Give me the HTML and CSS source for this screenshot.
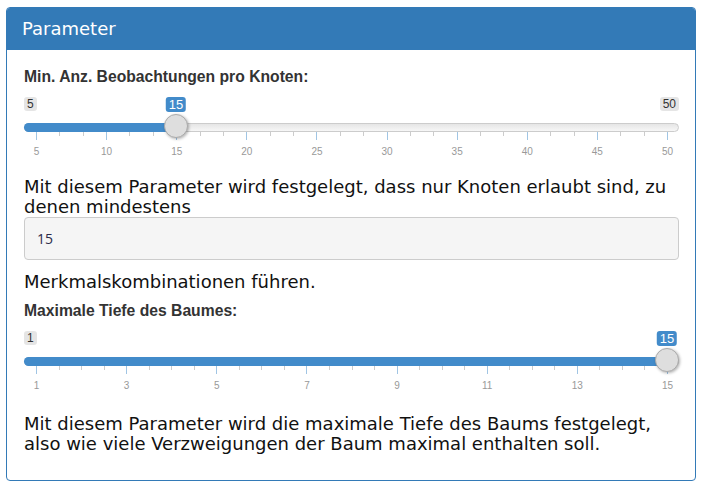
FILE: index.html
```html
<!DOCTYPE html>
<html lang="de">
<head>
<meta charset="utf-8">
<title>Parameter</title>
<link rel="stylesheet" href="styles.css">
</head>
<body>
<div class="panel">
  <div class="panel-heading"><h3 class="panel-title">Parameter</h3></div>
  <div class="panel-body">
    <div class="form-group first">
      <label class="control-label">Min. Anz. Beobachtungen pro Knoten:</label>
      <div class="irs">
        <span class="irs-min">5</span>
        <span class="irs-max">50</span>
        <span class="irs-line"></span>
        <span class="irs-bar" style="width:152px"></span>
        <span class="irs-grid">
          <span class="pol" style="left:0%"></span>
          <span class="pol small" style="left:3.704%"></span>
          <span class="pol small" style="left:7.407%"></span>
          <span class="pol" style="left:11.111%"></span>
          <span class="pol small" style="left:14.815%"></span>
          <span class="pol small" style="left:18.519%"></span>
          <span class="pol" style="left:22.222%"></span>
          <span class="pol small" style="left:25.926%"></span>
          <span class="pol small" style="left:29.630%"></span>
          <span class="pol" style="left:33.333%"></span>
          <span class="pol small" style="left:37.037%"></span>
          <span class="pol small" style="left:40.741%"></span>
          <span class="pol" style="left:44.444%"></span>
          <span class="pol small" style="left:48.148%"></span>
          <span class="pol small" style="left:51.852%"></span>
          <span class="pol" style="left:55.556%"></span>
          <span class="pol small" style="left:59.259%"></span>
          <span class="pol small" style="left:62.963%"></span>
          <span class="pol" style="left:66.667%"></span>
          <span class="pol small" style="left:70.370%"></span>
          <span class="pol small" style="left:74.074%"></span>
          <span class="pol" style="left:77.778%"></span>
          <span class="pol small" style="left:81.481%"></span>
          <span class="pol small" style="left:85.185%"></span>
          <span class="pol" style="left:88.889%"></span>
          <span class="pol small" style="left:92.593%"></span>
          <span class="pol small" style="left:96.296%"></span>
          <span class="pol" style="left:100%"></span>
          <span class="gtext" style="left:0%">5</span>
          <span class="gtext" style="left:11.111%">10</span>
          <span class="gtext" style="left:22.222%">15</span>
          <span class="gtext" style="left:33.333%">20</span>
          <span class="gtext" style="left:44.444%">25</span>
          <span class="gtext" style="left:55.556%">30</span>
          <span class="gtext" style="left:66.667%">35</span>
          <span class="gtext" style="left:77.778%">40</span>
          <span class="gtext" style="left:88.889%">45</span>
          <span class="gtext" style="left:100%">50</span>
        </span>
        <span class="irs-slider" style="left:140px"></span>
        <span class="irs-single" style="left:152px">15</span>
      </div>
    </div>
    <p class="text p1">Mit diesem Parameter wird festgelegt, dass nur Knoten erlaubt sind, zu denen mindestens</p>
    <pre class="verbatim">15</pre>
    <p class="text p2">Merkmalskombinationen führen.</p>
    <div class="form-group second">
      <label class="control-label">Maximale Tiefe des Baumes:</label>
      <div class="irs">
        <span class="irs-min">1</span>
        <span class="irs-line"></span>
        <span class="irs-bar" style="width:643px"></span>
        <span class="irs-grid">
          <span class="pol" style="left:0%"></span>
          <span class="pol small" style="left:3.571%"></span>
          <span class="pol small" style="left:7.143%"></span>
          <span class="pol small" style="left:10.714%"></span>
          <span class="pol" style="left:14.286%"></span>
          <span class="pol small" style="left:17.857%"></span>
          <span class="pol small" style="left:21.429%"></span>
          <span class="pol small" style="left:25%"></span>
          <span class="pol" style="left:28.571%"></span>
          <span class="pol small" style="left:32.143%"></span>
          <span class="pol small" style="left:35.714%"></span>
          <span class="pol small" style="left:39.286%"></span>
          <span class="pol" style="left:42.857%"></span>
          <span class="pol small" style="left:46.429%"></span>
          <span class="pol small" style="left:50%"></span>
          <span class="pol small" style="left:53.571%"></span>
          <span class="pol" style="left:57.143%"></span>
          <span class="pol small" style="left:60.714%"></span>
          <span class="pol small" style="left:64.286%"></span>
          <span class="pol small" style="left:67.857%"></span>
          <span class="pol" style="left:71.429%"></span>
          <span class="pol small" style="left:75%"></span>
          <span class="pol small" style="left:78.571%"></span>
          <span class="pol small" style="left:82.143%"></span>
          <span class="pol" style="left:85.714%"></span>
          <span class="pol small" style="left:89.286%"></span>
          <span class="pol small" style="left:92.857%"></span>
          <span class="pol small" style="left:96.429%"></span>
          <span class="pol" style="left:100%"></span>
          <span class="gtext" style="left:0%">1</span>
          <span class="gtext" style="left:14.286%">3</span>
          <span class="gtext" style="left:28.571%">5</span>
          <span class="gtext" style="left:42.857%">7</span>
          <span class="gtext" style="left:57.143%">9</span>
          <span class="gtext" style="left:71.429%">11</span>
          <span class="gtext" style="left:85.714%">13</span>
          <span class="gtext" style="left:100%">15</span>
        </span>
        <span class="irs-slider" style="left:631px"></span>
        <span class="irs-single" style="left:643px">15</span>
      </div>
    </div>
    <p class="text p3">Mit diesem Parameter wird die maximale Tiefe des Baums festgelegt, also wie viele Verzweigungen der Baum maximal enthalten soll.</p>
  </div>
</div>
</body>
</html>
```

FILE: styles.css
```css
* { box-sizing: border-box; }

html, body {
  margin: 0;
  padding: 0;
  background: #fff;
}

body {
  font-family: "Liberation Sans", Arial, sans-serif;
  color: #333;
  font-size: 14px;
}

.panel {
  margin: 7px 0 0 6px;
  width: 690px;
  border: 1px solid #337ab7;
  border-radius: 4px;
  background: #fff;
}

.panel-heading {
  background: #337ab7;
  padding: 9px 15px 10px;
  border-radius: 3px 3px 0 0;
}

.panel-title {
  margin: 0;
  font-family: "DejaVu Sans", sans-serif;
  font-weight: normal;
  font-size: 18px;
  line-height: 23px;
  color: #fff;
}

.panel-body {
  padding: 17px 16px 26px 17px;
}

.form-group {
  display: flex;
  flex-direction: column;
}

.control-label {
  display: block;
  font-weight: bold;
  font-size: 15.7px;
  line-height: 20px;
  color: #333;
  margin-bottom: 10px;
}

.second {
  margin-top: 10px;
}

.text {
  margin: 0;
  font-family: "DejaVu Sans", sans-serif;
  font-size: 18px;
  line-height: 19.8px;
  color: #111;
}

.p1 { margin-top: 19px; }
.p2 { margin-top: 12px; }
.p3 { margin-top: 22px; }

.verbatim {
  margin: 0;
  height: 43px;
  padding: 11px 12px;
  font-family: "Open Sans", sans-serif;
  font-size: 14px;
  line-height: 19px;
  color: #2b2b4a;
  background: #f5f5f5;
  border: 1px solid #ccc;
  border-radius: 4px;
}

/* slider */
.irs {
  position: relative;
  display: block;
  height: 61px;
}

.irs-min, .irs-max {
  position: absolute;
  top: 0;
  font-size: 12px;
  line-height: 12px;
  padding: 1px 3px;
  color: #333;
  background: rgba(0, 0, 0, 0.1);
  border-radius: 3px;
}
.irs-min { left: 0; }
.irs-max { right: 0; }

.irs-line {
  position: absolute;
  left: 0;
  right: 0;
  top: 26px;
  height: 9px;
  border: 1px solid #ccc;
  border-radius: 16px;
  background: linear-gradient(to bottom, #dddddd -50%, #ffffff 150%);
}

.irs-bar {
  position: absolute;
  left: 0;
  top: 26px;
  height: 9px;
  background: #428bca;
  border-radius: 8px 0 0 8px;
}

.irs-grid {
  position: absolute;
  left: 12px;
  right: 12px;
  top: 35px;
  height: 26px;
}

.pol {
  position: absolute;
  top: 0;
  width: 1px;
  height: 8px;
  background: #428bca;
  opacity: 0.5;
}
.pol.small {
  height: 4px;
  background: #999;
}

.gtext {
  position: absolute;
  top: 14px;
  transform: translateX(-50%);
  margin-left: 0.5px;
  font-size: 10px;
  line-height: 12px;
  color: #999;
  white-space: nowrap;
}

.irs-slider {
  position: absolute;
  top: 17px;
  width: 24px;
  height: 24px;
  background: #dedede;
  border: 1px solid #ababab;
  border-radius: 50%;
  box-shadow: 1px 1px 3px rgba(0, 0, 0, 0.3);
}

.irs-single {
  position: absolute;
  top: 0;
  transform: translateX(-50%);
  font-size: 13px;
  line-height: 13px;
  padding: 1px 3px;
  color: #fff;
  background: #428bca;
  border-radius: 3px;
  white-space: nowrap;
}
```
